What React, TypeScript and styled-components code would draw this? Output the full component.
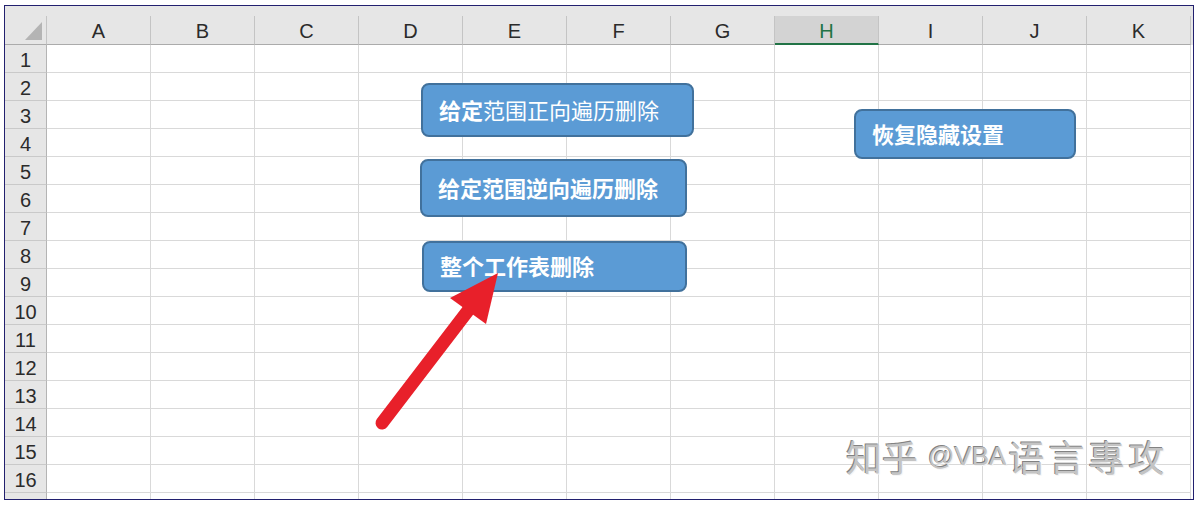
import styled, { createGlobalStyle } from 'styled-components';

const GlobalStyle = createGlobalStyle`
  html, body {
    margin: 0;
    padding: 0;
    background: #ffffff;
  }
`;

const COLUMNS = ['A', 'B', 'C', 'D', 'E', 'F', 'G', 'H', 'I', 'J', 'K'];
const ROWS = Array.from({ length: 16 }, (_, i) => i + 1);
const ACTIVE_COLUMN = 'H';

const Frame = styled.div`
  position: relative;
  margin: 5px 0 0 4px;
  width: 1188px;
  height: 493px;
  border: 1px solid #22206f;
  overflow: hidden;
  background: #ffffff;
  font-family: 'Liberation Sans', Arial, sans-serif;
`;

const HeaderRow = styled.div`
  display: flex;
  padding-top: 10px;
  background: #e6e6e6;
`;

const Corner = styled.div`
  box-sizing: border-box;
  display: flex;
  justify-content: flex-end;
  align-items: flex-end;
  width: 42px;
  height: 29px;
  padding: 0 4px 4px 0;
  border-right: 1px solid #c4c4c4;
  border-bottom: 1px solid #ababab;
`;

const CornerMark = styled.div`
  width: 17px;
  height: 18px;
  background: #b4b4b4;
  clip-path: polygon(100% 0, 100% 100%, 0 100%);
`;

const ColHeader = styled.div<{ $active?: boolean }>`
  box-sizing: border-box;
  display: flex;
  align-items: center;
  justify-content: center;
  width: 104px;
  height: 29px;
  padding-top: 3px;
  border-right: 1px solid #c4c4c4;
  border-bottom: ${(p) => (p.$active ? '2px solid #217346' : '1px solid #ababab')};
  background: ${(p) => (p.$active ? '#d3d3d3' : '#e6e6e6')};
  color: ${(p) => (p.$active ? '#217346' : '#2b2b2b')};
  font-size: 20px;
`;

const Row = styled.div`
  display: flex;
`;

const RowHeader = styled.div`
  box-sizing: border-box;
  display: flex;
  align-items: center;
  justify-content: center;
  width: 42px;
  height: 28px;
  padding-top: 3px;
  background: #e6e6e6;
  border-right: 1px solid #b4b4b4;
  border-bottom: 1px solid #c9c9c9;
  color: #2b2b2b;
  font-size: 20px;
`;

const Cell = styled.div`
  box-sizing: border-box;
  width: 104px;
  height: 28px;
  border-right: 1px solid #d9d9d9;
  border-bottom: 1px solid #d9d9d9;
`;

const TailRow = styled.div`
  display: flex;
  height: 6px;
`;

const TailHeader = styled.div`
  box-sizing: border-box;
  width: 42px;
  background: #e6e6e6;
  border-right: 1px solid #b4b4b4;
`;

const TailCell = styled.div`
  box-sizing: border-box;
  width: 104px;
  border-right: 1px solid #d9d9d9;
`;

const MacroButton = styled.div<{ $x: number; $y: number; $w: number; $h: number }>`
  position: absolute;
  left: ${(p) => p.$x}px;
  top: ${(p) => p.$y}px;
  width: ${(p) => p.$w}px;
  height: ${(p) => p.$h}px;
  box-sizing: border-box;
  display: flex;
  align-items: center;
  padding: 0 0 3px 16px;
  background: #5b9bd5;
  border: 2px solid #41719c;
  border-radius: 8px;
  color: #ffffff;
  font-family: 'Noto Sans CJK SC', 'Microsoft YaHei', sans-serif;
  font-size: 22px;
  font-weight: 700;
  white-space: nowrap;
`;

const Light = styled.span`
  font-weight: 400;
`;

const ArrowLayer = styled.svg`
  position: absolute;
  left: 0;
  top: 0;
  pointer-events: none;
`;

const Watermark = styled.div`
  position: absolute;
  left: 841px;
  top: 432px;
  display: flex;
  align-items: center;
  height: 36px;
  color: #c4c4c4;
  text-shadow: -1px -1px 0 #828282, 1px 1px 0 #f6f6f6;
  pointer-events: none;
`;

const WatermarkCjk = styled.span<{ $spacing: number }>`
  font-family: 'Noto Sans CJK SC', sans-serif;
  font-size: 36px;
  letter-spacing: ${(p) => p.$spacing}px;
`;

const WatermarkLatin = styled.span`
  margin: 0 2px 0 10px;
  font-family: 'Liberation Sans', Arial, sans-serif;
  font-size: 26px;
`;

export default function App() {
  return (
    <>
      <GlobalStyle />
      <Frame>
        <HeaderRow>
          <Corner>
            <CornerMark />
          </Corner>
          {COLUMNS.map((c) => (
            <ColHeader key={c} $active={c === ACTIVE_COLUMN}>
              {c}
            </ColHeader>
          ))}
        </HeaderRow>
        {ROWS.map((r) => (
          <Row key={r}>
            <RowHeader>{r}</RowHeader>
            {COLUMNS.map((c) => (
              <Cell key={c} />
            ))}
          </Row>
        ))}
        <TailRow>
          <TailHeader />
          {COLUMNS.map((c) => (
            <TailCell key={c} />
          ))}
        </TailRow>

        <MacroButton $x={416} $y={77} $w={273} $h={54}>
          给定<Light>范围正向遍历删除</Light>
        </MacroButton>
        <MacroButton $x={415} $y={153} $w={267} $h={58}>
          给定范围逆向遍历删除
        </MacroButton>
        <MacroButton $x={417} $y={235} $w={265} $h={51}>
          整个工作表删除
        </MacroButton>
        <MacroButton $x={849} $y={103} $w={222} $h={50}>
          恢复隐藏设置
        </MacroButton>

        <ArrowLayer width={1188} height={493} viewBox="0 0 1188 493">
          <line
            x1={377}
            y1={417}
            x2={465}
            y2={302}
            stroke="#e8202a"
            strokeWidth={13}
            strokeLinecap="round"
          />
          <polygon points="493,267 445,292 481,318" fill="#e8202a" />
        </ArrowLayer>

        <Watermark>
          <WatermarkCjk $spacing={0}>知乎</WatermarkCjk>
          <WatermarkLatin>@VBA</WatermarkLatin>
          <WatermarkCjk $spacing={4}>语言專攻</WatermarkCjk>
        </Watermark>
      </Frame>
    </>
  );
}
